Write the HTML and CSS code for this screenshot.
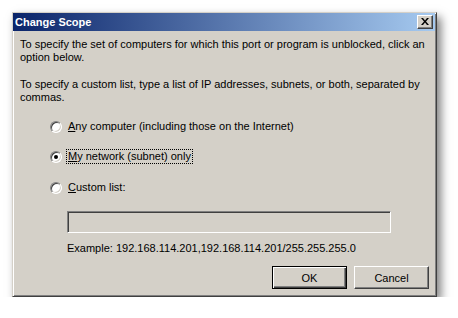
FILE: index.html
```html
<!DOCTYPE html>
<html>
<head>
<meta charset="utf-8">
<title>Change Scope</title>
<link rel="stylesheet" href="styles.css">
</head>
<body>
<div class="dialog">
  <div class="titlebar">
    <span class="title">Change Scope</span>
    <div class="close">
      <svg width="8" height="7" viewBox="0 0 8 7"><path d="M0 0h2l2 2.5L6 0h2L5 3.5L8 7H6L4 4.5L2 7H0l3-3.5z" fill="#000"/></svg>
    </div>
  </div>
  <div class="content">
    <p class="para">To specify the set of computers for which this port or program is unblocked, click an option below.</p>
    <p class="para">To specify a custom list, type a list of IP addresses, subnets, or both, separated by commas.</p>
    <div class="options">
      <div class="option"><span class="radio"></span><span class="label"><u>A</u>ny computer (including those on the Internet)</span></div>
      <div class="option"><span class="radio checked"></span><span class="label focus"><u>M</u>y network (subnet) only</span></div>
      <div class="option third"><span class="radio"></span><span class="label"><u>C</u>ustom list:</span></div>
    </div>
    <div class="custom">
      <div class="textbox"></div>
      <div class="example">Example: 192.168.114.201,192.168.114.201/255.255.255.0</div>
    </div>
    <div class="buttons">
      <div class="btn default">OK</div>
      <div class="btn">Cancel</div>
    </div>
  </div>
</div>
</body>
</html>
```
FILE: styles.css
```css
html, body {
  margin: 0;
  padding: 0;
  background: #fff;
}
body {
  padding: 12px 0 0 12px;
  font-family: "Liberation Sans", Arial, sans-serif;
  font-size: 11px;
  color: #000;
}
.dialog {
  box-sizing: border-box;
  width: 425px;
  height: 285px;
  background: #D4D0C8;
  border: 1px solid;
  border-color: #D4D0C8 #404040 #404040 #D4D0C8;
  box-shadow: inset 1px 1px 0 #fff, inset -1px -1px 0 #808080, 4px 5px 9px rgba(0,0,0,0.5);
  padding: 0 1px 0 0;
  display: flex;
  flex-direction: column;
}
.titlebar {
  height: 18px;
  background: linear-gradient(to right, #0A246A, #A6CAF0);
  display: flex;
  align-items: center;
  justify-content: space-between;
  padding: 0 2px 0 2px;
}
.title {
  color: #fff;
  font-weight: bold;
  font-size: 11px;
}
.close {
  box-sizing: border-box;
  width: 16px;
  height: 14px;
  background: #D4D0C8;
  border: 1px solid;
  border-color: #fff #404040 #404040 #fff;
  box-shadow: inset -1px -1px 0 #808080;
  display: flex;
  align-items: center;
  justify-content: center;
  padding: 0 1px 1px 0;
}
.close svg { display: block; }
.content {
  padding: 7px 0 0 7px;
  display: flex;
  flex-direction: column;
}
.para {
  margin: 0 0 14px 0;
  line-height: 13px;
  width: 408px;
}
.options {
  margin-top: 2px;
  display: flex;
  flex-direction: column;
  gap: 17px;
  padding-left: 30px;
}
.option {
  display: flex;
  align-items: center;
  height: 13px;
}
.option.third {
  margin-top: 1px;
}
.radio {
  box-sizing: border-box;
  width: 12px;
  height: 12px;
  border-radius: 50%;
  background: #fff;
  border: 1px solid;
  border-color: #808080 #fff #fff #808080;
  box-shadow: inset 1px 1px 0 #404040, inset -1px -1px 0 #D4D0C8;
  margin-right: 5px;
  position: relative;
}
.radio.checked::after {
  content: "";
  position: absolute;
  left: 3px;
  top: 3px;
  width: 4px;
  height: 4px;
  border-radius: 50%;
  background: #000;
}
.label {
  padding: 0 1px;
  line-height: 13px;
}
.label.focus {
  outline: 1px dotted #000;
  outline-offset: 0;
}
.custom {
  padding-left: 47px;
  margin-top: 17px;
  display: flex;
  flex-direction: column;
}
.textbox {
  box-sizing: border-box;
  width: 324px;
  height: 22px;
  background: #D4D0C8;
  border: 1px solid;
  border-color: #808080 #fff #fff #808080;
  box-shadow: inset 1px 1px 0 #404040, inset -1px -1px 0 #D4D0C8;
}
.example {
  margin-top: 9px;
  line-height: 13px;
}
.buttons {
  display: flex;
  justify-content: flex-end;
  gap: 7px;
  margin-top: 11px;
  padding-right: 6px;
}
.btn {
  box-sizing: border-box;
  width: 75px;
  height: 23px;
  background: #D4D0C8;
  border: 1px solid;
  border-color: #fff #404040 #404040 #fff;
  box-shadow: inset -1px -1px 0 #808080;
  display: flex;
  align-items: center;
  justify-content: center;
}
.btn.default {
  border: 1px solid #000;
  box-shadow: inset 1px 1px 0 #fff, inset -1px -1px 0 #404040, inset -2px -2px 0 #808080;
}
```
